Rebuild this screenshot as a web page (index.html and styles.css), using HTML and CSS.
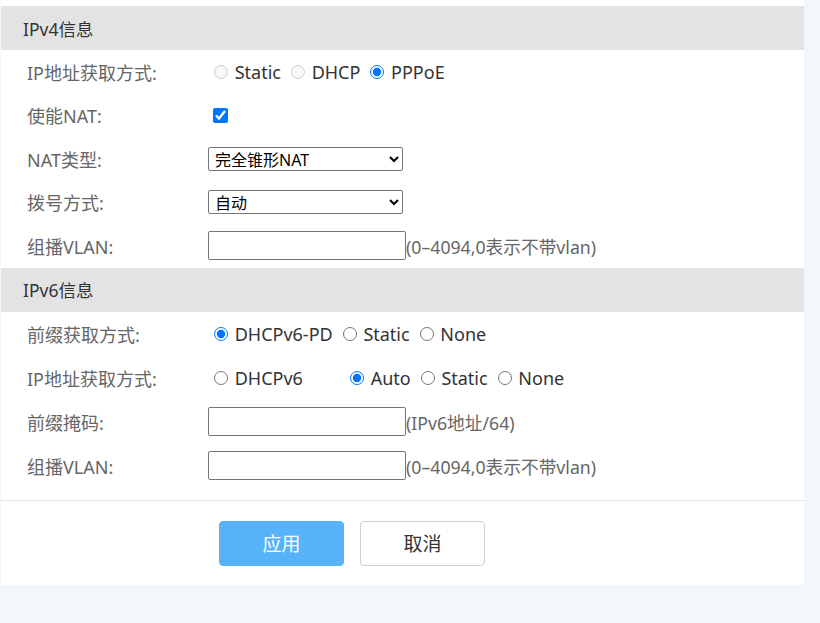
FILE: index.html
```html
<!DOCTYPE html>
<html lang="zh-CN">
<head>
<meta charset="utf-8">
<title>WAN设置</title>
<link rel="stylesheet" href="styles.css">
</head>
<body>
<div class="panel">
  <div class="section-head">IPv4信息</div>
  <div class="rows v4">
    <div class="row">
      <span class="label">IP地址获取方式:</span>
      <span class="ctrl">
        <label class="opt"><input type="radio" name="v4mode" disabled> Static</label>
        <label class="opt"><input type="radio" name="v4mode" disabled> DHCP</label>
        <label class="opt"><input type="radio" name="v4mode" checked> PPPoE</label>
      </span>
    </div>
    <div class="row">
      <span class="label">使能NAT:</span>
      <span class="ctrl"><input type="checkbox" class="chk" checked></span>
    </div>
    <div class="row">
      <span class="label">NAT类型:</span>
      <span class="ctrl">
        <select class="sel"><option>完全锥形NAT</option><option>对称NAT</option></select>
      </span>
    </div>
    <div class="row">
      <span class="label">拨号方式:</span>
      <span class="ctrl">
        <select class="sel"><option>自动</option><option>手动</option></select>
      </span>
    </div>
    <div class="row">
      <span class="label">组播VLAN:</span>
      <span class="ctrl"><input type="text" class="txt"><span class="hint">(0–4094,0表示不带vlan)</span></span>
    </div>
  </div>
  <div class="section-head">IPv6信息</div>
  <div class="rows v6">
    <div class="row">
      <span class="label">前缀获取方式:</span>
      <span class="ctrl">
        <label class="opt"><input type="radio" name="pfx" checked> DHCPv6-PD</label>
        <label class="opt"><input type="radio" name="pfx"> Static</label>
        <label class="opt"><input type="radio" name="pfx"> None</label>
      </span>
    </div>
    <div class="row">
      <span class="label">IP地址获取方式:</span>
      <span class="ctrl">
        <label class="opt wide"><input type="radio" name="v6ip"> DHCPv6</label>
        <label class="opt"><input type="radio" name="v6ip" checked> Auto</label>
        <label class="opt"><input type="radio" name="v6ip"> Static</label>
        <label class="opt"><input type="radio" name="v6ip"> None</label>
      </span>
    </div>
    <div class="row">
      <span class="label">前缀掩码:</span>
      <span class="ctrl"><input type="text" class="txt"><span class="hint">(IPv6地址/64)</span></span>
    </div>
    <div class="row">
      <span class="label">组播VLAN:</span>
      <span class="ctrl"><input type="text" class="txt"><span class="hint">(0–4094,0表示不带vlan)</span></span>
    </div>
  </div>
  <div class="actions">
    <button class="btn primary">应用</button>
    <button class="btn">取消</button>
  </div>
</div>
</body>
</html>
```
FILE: styles.css
```css
html, body {
  margin: 0;
  padding: 0;
  background: #f3f7fc;
  font-family: "Noto Sans", "Noto Sans CJK SC", sans-serif;
}
.panel {
  margin-left: 1px;
  width: 803px;
  background: #fff;
  padding-top: 6px;
  padding-bottom: 19px;
}
.section-head {
  height: 44px;
  display: flex;
  align-items: center;
  padding-left: 22px;
  background: #e3e3e3;
  color: #333;
  font-size: 17.5px;
}
.rows {
  display: flex;
  flex-direction: column;
}
.v4 .row { height: 43.5px; }
.v6 .row { height: 44px; }
.row {
  display: grid;
  grid-template-columns: 181px 1fr;
  align-items: center;
  padding-left: 26px;
}
.label {
  color: #666;
  font-size: 18px;
}
.ctrl {
  display: flex;
  align-items: center;
  color: #333;
  font-size: 18px;
}
.opt {
  display: inline-flex;
  align-items: center;
  white-space: pre;
  margin-right: 4px;
}
.opt input {
  margin: 0 2px 0 6px;
  width: 14px;
  height: 14px;
}
.opt.wide {
  width: 132px;
}
.chk {
  margin: 0 0 0 5px;
  width: 15px;
  height: 15px;
}
.sel {
  width: 195px;
  height: 24px;
  font-family: "Noto Sans", "Noto Sans CJK SC", sans-serif;
  font-size: 16px;
  color: #000;
  border: 1px solid #767676;
  border-radius: 2px;
  background: #fff;
  padding: 0 2px;
}
.txt {
  box-sizing: border-box;
  width: 198px;
  height: 29px;
  border: 1px solid #767676;
  border-radius: 2px;
  margin: 0;
  padding: 0 4px;
  font-size: 15px;
}
.hint {
  color: #666;
  font-size: 17.7px;
}
.actions {
  margin-top: 12px;
  border-top: 1px solid #e5e5e5;
  padding-top: 20px;
  padding-left: 218px;
  display: flex;
  gap: 16px;
}
.btn {
  width: 125px;
  height: 45px;
  border-radius: 4px;
  border: 1px solid #cfcfcf;
  background: #fff;
  color: #333;
  font-family: "Noto Sans", "Noto Sans CJK SC", sans-serif;
  font-size: 19px;
}
.btn.primary {
  background: #57b3f9;
  border-color: #57b3f9;
  color: #fff;
}
```
